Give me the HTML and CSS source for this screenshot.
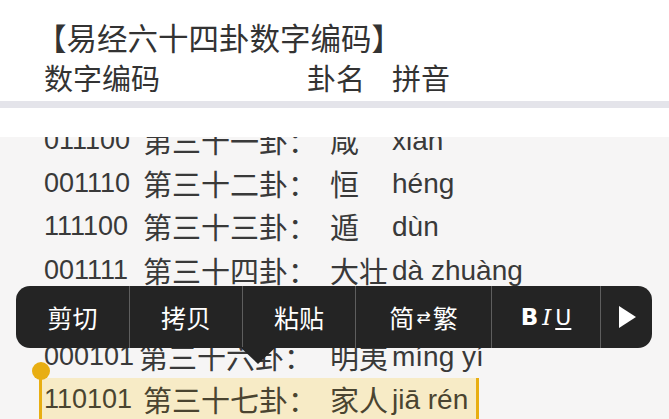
FILE: index.html
```html
<!DOCTYPE html>
<html lang="zh">
<head>
<meta charset="utf-8">
<link rel="stylesheet" href="styles.css">
</head>
<body>
<div class="screen">
  <div class="top">
    <div class="title">【易经六十四卦数字编码】</div>
    <div class="head">
      <span class="h-code">数字编码</span>
      <span class="h-name">卦名</span>
      <span class="h-py">拼音</span>
    </div>
  </div>
  <div class="band"></div>
  <div class="gap"></div>
  <div class="list">
    <div class="lines">
      <div class="row"><span class="code">011100</span><span class="label">第三十一卦：</span><span class="name">咸</span><span class="py">xián</span></div>
      <div class="row"><span class="code">001110</span><span class="label">第三十二卦：</span><span class="name">恒</span><span class="py">héng</span></div>
      <div class="row"><span class="code">111100</span><span class="label">第三十三卦：</span><span class="name">遁</span><span class="py">dùn</span></div>
      <div class="row"><span class="code">001111</span><span class="label">第三十四卦：</span><span class="name">大壮</span><span class="py">dà zhuàng</span></div>
      <div class="row"><span class="code">101000</span><span class="label">第三十五卦：</span><span class="name">晋</span><span class="py">jìn</span></div>
      <div class="row"><span class="code">000101</span><span class="label tight">第三十六卦：</span><span class="name">明夷</span><span class="py">míng yí</span></div>
      <div class="row selected"><span class="code">110101</span><span class="label">第三十七卦：</span><span class="name">家人</span><span class="py">jiā rén</span></div>
    </div>

    <div class="menu">
      <div class="item w1">剪切</div>
      <div class="item w2">拷贝</div>
      <div class="item w3">粘贴</div>
      <div class="item w4">简<span class="swap">⇄</span>繁</div>
      <div class="item w5"><span class="b">B</span><span class="i">I</span><span class="u">U</span></div>
      <div class="item w6">
        <svg width="18" height="22" viewBox="0 0 18 22"><path d="M1 0 L18 11 L1 22 Z" fill="#fff"/></svg>
      </div>
    </div>
    <div class="menu-arrow"></div>

    <div class="handle-dot"></div>
    <div class="handle-line"></div>
    <div class="caret-end"></div>
  </div>
</div>
</body>
</html>
```
FILE: styles.css
```css
* { box-sizing: border-box; }
html, body { margin: 0; padding: 0; }
body {
  width: 669px;
  height: 419px;
  overflow: hidden;
  background: #ffffff;
  font-family: "Liberation Sans", "Noto Sans CJK SC", sans-serif;
  color: #393939;
}
.screen {
  width: 669px;
  height: 419px;
  display: flex;
  flex-direction: column;
  overflow: hidden;
}
.top {
  padding-top: 17px;
  background: #fff;
}
.title {
  font-family: "Noto Sans CJK SC", sans-serif;
  font-size: 30.5px;
  line-height: 40px;
  padding-left: 36px;
  color: #333;
}
.head {
  display: flex;
  font-family: "Noto Sans CJK SC", sans-serif;
  font-size: 29px;
  line-height: 40px;
  color: #333;
}
.h-code { width: 307px; padding-left: 44px; }
.h-name { width: 85px; }
.band {
  margin-top: 4px;
  height: 7px;
  background: #e4e4ea;
}
.gap { height: 29px; background: #fff; }
.list {
  position: relative;
  flex: 1;
  overflow: hidden;
  background: #f6f5f5;
}
.lines {
  margin-top: -18px;
}
.row {
  display: grid;
  grid-template-columns: 143px 187px 62px auto;
  height: 43.2px;
  line-height: 43.2px;
  font-size: 29px;
  white-space: nowrap;
}
.code {
  padding-left: 44px;
  font-size: 27px;
}
.label, .name {
  font-family: "Noto Sans CJK SC", sans-serif;
}
.label.tight { margin-left: -4px; }
.py { font-size: 28px; }
.selected {
  background: linear-gradient(to right, transparent 40px, #f7ebc6 40px, #f7ebc6 478px, transparent 478px);
  color: #4a4430;
}
.menu {
  position: absolute;
  left: 16px;
  top: 149px;
  width: 636px;
  height: 62px;
  background: #242424;
  border-radius: 14px;
  display: flex;
  color: #fff;
  font-family: "Noto Sans CJK SC", sans-serif;
  font-size: 25px;
  overflow: hidden;
}
.item {
  display: flex;
  align-items: center;
  justify-content: center;
  border-left: 1px solid #5e5e5e;
  height: 100%;
}
.item.w1 { border-left: none; width: 113px; }
.w2 { width: 113px; }
.w3 { width: 113px; }
.w4 { width: 136px; }
.w5 { width: 109px; }
.w6 { flex: 1; }
.swap { font-size: 17px; margin: 0 2px; font-family: "DejaVu Sans", sans-serif; }
.b { font-family: "DejaVu Sans", sans-serif; font-weight: bold; font-size: 23px; margin-right: 4px; }
.i { font-family: "DejaVu Serif", serif; font-style: italic; font-size: 23px; margin-right: 4px; }
.u { font-family: "DejaVu Sans", sans-serif; font-size: 22px; text-decoration: underline; text-decoration-thickness: 2px; text-underline-offset: 3px; }
.menu-arrow {
  position: absolute;
  left: 240px;
  top: 210px;
  width: 0;
  height: 0;
  border-left: 18px solid transparent;
  border-right: 18px solid transparent;
  border-top: 17px solid #242424;
}
.handle-dot {
  position: absolute;
  left: 32px;
  top: 225px;
  width: 18px;
  height: 18px;
  border-radius: 50%;
  background: #e8ae12;
}
.handle-line {
  position: absolute;
  left: 39px;
  top: 234px;
  width: 3px;
  height: 60px;
  background: #e8ae12;
}
.caret-end {
  position: absolute;
  left: 476px;
  top: 241px;
  width: 3px;
  height: 50px;
  background: #e8ae12;
}
```
